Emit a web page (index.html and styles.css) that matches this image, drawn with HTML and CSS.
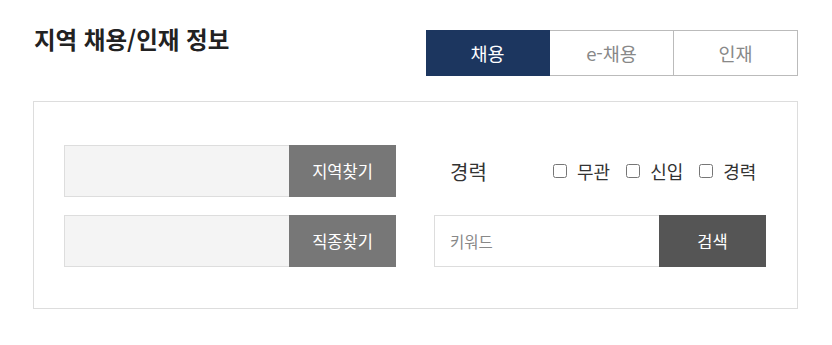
FILE: index.html
```html
<!DOCTYPE html>
<html lang="ko">
<head>
<meta charset="utf-8">
<title>지역 채용/인재 정보</title>
<link rel="stylesheet" href="styles.css">
</head>
<body>
<div class="page">
  <div class="head">
    <h2 class="title">지역 채용/인재 정보</h2>
    <ul class="tabs">
      <li class="tab active">채용</li>
      <li class="tab">e-채용</li>
      <li class="tab">인재</li>
    </ul>
  </div>
  <div class="box">
    <div class="col">
      <div class="field">
        <div class="input gray"></div>
        <button class="btn light">지역찾기</button>
      </div>
      <div class="field">
        <div class="input gray"></div>
        <button class="btn light">직종찾기</button>
      </div>
    </div>
    <div class="col">
      <div class="career">
        <span class="label">경력</span>
        <div class="checks">
          <label class="check"><input type="checkbox"><span>무관</span></label>
          <label class="check"><input type="checkbox"><span>신입</span></label>
          <label class="check"><input type="checkbox"><span>경력</span></label>
        </div>
      </div>
      <div class="field">
        <div class="input white"><span class="ph">키워드</span></div>
        <button class="btn dark">검색</button>
      </div>
    </div>
  </div>
</div>
</body>
</html>
```
FILE: styles.css
```css
* { box-sizing: border-box; }
html, body { margin: 0; padding: 0; background: #fff; }
body {
  font-family: "Noto Sans CJK KR", "Noto Sans", sans-serif;
  color: #333;
}
.page {
  width: 832px;
  padding: 0 34px 0 33px;
}
.head {
  display: flex;
  justify-content: space-between;
  align-items: flex-start;
  height: 101px;
  padding-top: 30px;
}
.title {
  margin: -7px 0 0 1px;
  font-size: 23.5px;
  font-weight: 700;
  color: #222;
  line-height: 32px;
}
.tabs {
  display: flex;
  list-style: none;
  margin: 0;
  padding: 0;
}
.tab {
  width: 124px;
  height: 46px;
  border: 1px solid #bbb;
  border-left: none;
  display: flex;
  align-items: center;
  justify-content: center;
  font-size: 18.5px;
  color: #888;
}
.tab.active {
  background: #1c365f;
  border-color: #1c365f;
  color: #fff;
}
.box {
  border: 1px solid #ddd;
  width: 765px;
  height: 208px;
  padding: 43px 31px 0 30px;
  display: flex;
  gap: 38px;
}
.col {
  width: 332px;
  display: flex;
  flex-direction: column;
  gap: 18px;
}
.field {
  display: flex;
  height: 52px;
}
.input {
  flex: 1;
  border: 1px solid #ddd;
  display: flex;
  align-items: center;
}
.input.gray { background: #f4f4f4; border-right: none; }
.input.white { background: #fff; padding-left: 15px; border-right: none; }
.ph { font-size: 15.5px; color: #888; }
.btn {
  width: 107px;
  border: none;
  padding: 0;
  margin: 0;
  font-family: inherit;
  font-size: 16.5px;
  color: #fff;
}
.btn.light { background: #777; }
.btn.dark { background: #555; }
.career {
  height: 52px;
  display: flex;
  align-items: center;
  padding-left: 16px;
}
.label {
  font-size: 20px;
  color: #333;
  width: 103px;
}
.checks {
  display: flex;
  gap: 16px;
}
.check {
  display: flex;
  align-items: center;
  font-size: 18px;
  color: #333;
}
.check input {
  margin: 0 10px 0 0;
  width: 14px;
  height: 14px;
}
```
